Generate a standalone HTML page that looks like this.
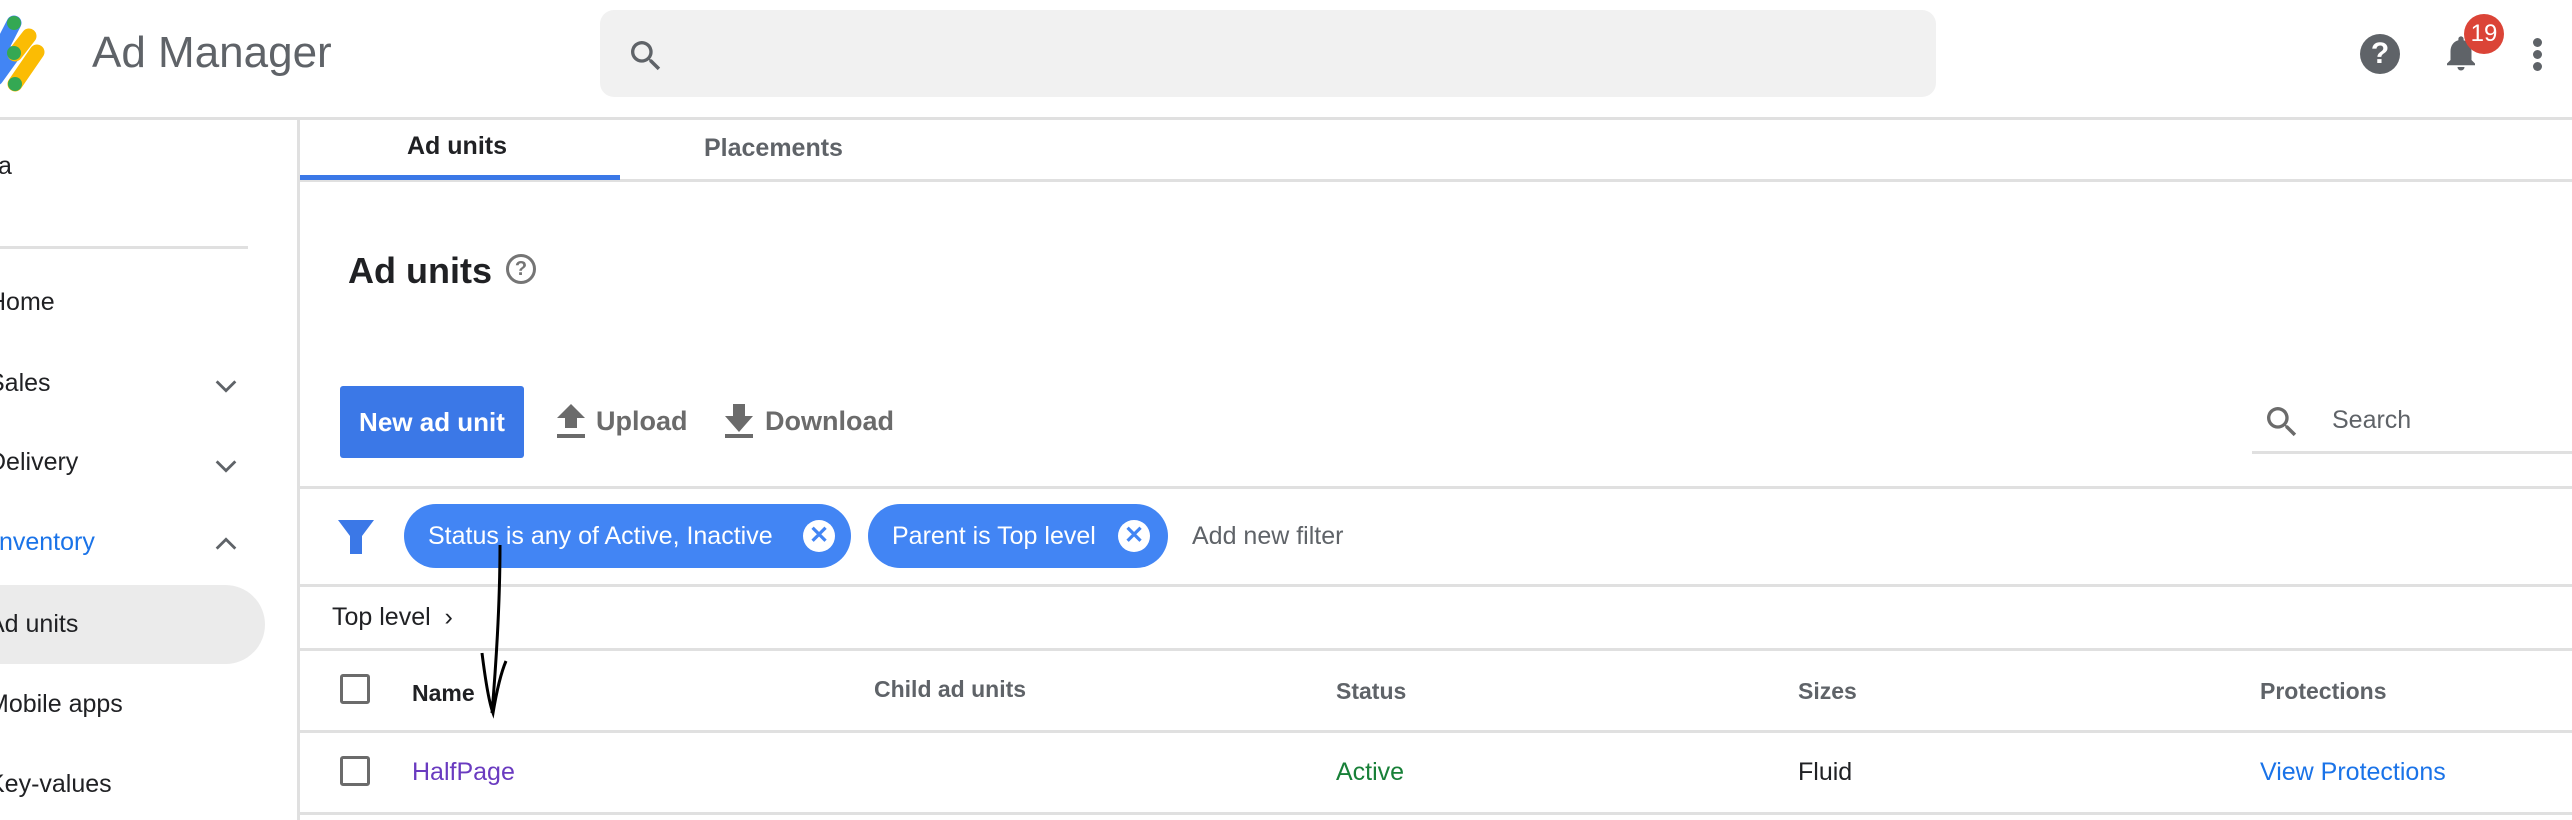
<!DOCTYPE html>
<html><head><meta charset="utf-8"><style>
*{margin:0;padding:0;box-sizing:border-box}
body{width:2572px;height:820px;overflow:hidden;background:#fff;font-family:"Liberation Sans",Arial,sans-serif;position:relative;color:#202124}
.a{position:absolute;white-space:nowrap}
.hl{position:absolute;height:3px;background:#e0e0e0}
.nav{font-size:25px;color:#202124}
.th{font-size:23px;color:#5f6368;font-weight:bold}
.cb{position:absolute;width:30px;height:30px;border:3px solid #6b6b6b;border-radius:3px}
.chip{position:absolute;height:64px;border-radius:32px;background:#4285f4;color:#fff;font-size:25px;line-height:64px;padding-left:24px}
.x{position:absolute;top:16px;width:32px;height:32px;border-radius:50%;background:#fff;color:#4285f4;font-size:24px;line-height:32px;text-align:center;font-weight:bold}
</style></head><body>
<svg class="a" style="left:0;top:0" width="60" height="100" viewBox="0 0 60 100">
<line x1="14" y1="23" x2="-6" y2="62" stroke="#4285f4" stroke-width="15" stroke-linecap="round"/>
<line x1="14" y1="53" x2="-4" y2="78" stroke="#4285f4" stroke-width="15" stroke-linecap="round"/>
<line x1="15" y1="54" x2="29" y2="36" stroke="#fbbc04" stroke-width="15" stroke-linecap="round"/>
<line x1="15" y1="84" x2="37" y2="52" stroke="#fbbc04" stroke-width="15" stroke-linecap="round"/>
<circle cx="14" cy="23" r="7" fill="#34a853"/><circle cx="14" cy="53" r="7" fill="#34a853"/><circle cx="15" cy="84" r="7" fill="#34a853"/>
</svg>
<div class="a" style="left:92px;top:28px;font-size:44px;color:#5f6368">Ad Manager</div>
<div class="a" style="left:600px;top:10px;width:1336px;height:87px;background:#f1f1f1;border-radius:14px"></div>
<svg class="a" style="left:626px;top:36px" width="40" height="40" viewBox="0 0 24 24"><path fill="#5f6368" d="M15.5 14h-.79l-.28-.27A6.470 6.470 0 0 0 16 9.5 6.5 6.5 0 1 0 9.5 16c1.61 0 3.090-.59 4.230-1.57l.27.28v.79l5 4.99L20.49 19l-4.99-5zm-6 0C7.01 14 5 11.99 5 9.5S7.01 5 9.5 5 14 7.01 14 9.5 11.99 14 9.5 14z"/></svg>
<div class="a" style="left:2360px;top:34px;width:40px;height:40px;border-radius:50%;background:#5f6368;color:#fff;font-size:30px;font-weight:bold;text-align:center;line-height:40px">?</div>
<svg class="a" style="left:2440px;top:30px" width="42" height="46" viewBox="0 0 24 24"><path fill="#5f6368" d="M12 22c1.1 0 2-.9 2-2h-4c0 1.1.9 2 2 2zm6-6v-5c0-3.07-1.63-5.64-4.5-6.32V4c0-.83-.67-1.5-1.5-1.5s-1.5.67-1.5 1.5v.68C7.64 5.36 6 7.92 6 11v5l-2 2v1h16v-1l-2-2z"/></svg>
<div class="a" style="left:2464px;top:14px;width:40px;height:40px;border-radius:50%;background:#db4437;color:#fff;font-size:24px;text-align:center;line-height:40px">19</div>
<div class="a" style="left:2533px;top:38px;width:9px;height:9px;border-radius:50%;background:#5f6368;box-shadow:0 12px 0 #5f6368,0 24px 0 #5f6368"></div>
<div class="hl" style="left:0;top:117px;width:2572px"></div>
<div class="a" style="left:297px;top:118px;width:3px;height:702px;background:#e0e0e0"></div>
<div class="a nav" style="left:-2px;top:152px">a</div>
<div class="hl" style="left:0;top:246px;width:248px"></div>
<div class="a nav" style="left:-12px;top:288px">Home</div>
<div class="a nav" style="left:-12px;top:369px">Sales</div>
<div class="a nav" style="left:-12px;top:448px">Delivery</div>
<div class="a nav" style="left:-8px;top:528px;color:#1a73e8">Inventory</div>
<div class="a" style="left:0;top:585px;width:265px;height:79px;background:#ebebeb;border-radius:0 40px 40px 0"></div>
<div class="a nav" style="left:-12px;top:610px">Ad units</div>
<div class="a nav" style="left:-12px;top:690px">Mobile apps</div>
<div class="a nav" style="left:-12px;top:770px">Key-values</div>
<svg class="a" style="left:212px;top:372px" width="28" height="28" viewBox="0 0 24 24"><path d="M4 8l8 8 8-8" fill="none" stroke="#5f6368" stroke-width="2.4"/></svg>
<svg class="a" style="left:212px;top:452px" width="28" height="28" viewBox="0 0 24 24"><path d="M4 8l8 8 8-8" fill="none" stroke="#5f6368" stroke-width="2.4"/></svg>
<svg class="a" style="left:212px;top:530px" width="28" height="28" viewBox="0 0 24 24"><path d="M4 16l8-8 8 8" fill="none" stroke="#5f6368" stroke-width="2.4"/></svg>
<div class="a" style="left:407px;top:132px;font-size:25px;font-weight:bold">Ad units</div>
<div class="a" style="left:704px;top:134px;font-size:25px;font-weight:bold;color:#5f6368">Placements</div>
<div class="hl" style="left:300px;top:179px;width:2272px"></div>
<div class="a" style="left:300px;top:175px;width:320px;height:5px;background:#3b78e7"></div>
<div class="a" style="left:348px;top:250px;font-size:36px;font-weight:bold">Ad units</div>
<div class="a" style="left:506px;top:254px;width:30px;height:30px;border:3px solid #757575;border-radius:50%;color:#757575;font-size:20px;text-align:center;line-height:24px;font-weight:bold">?</div>
<div class="a" style="left:340px;top:386px;width:184px;height:72px;background:#3b78e7;border-radius:3px;color:#fff;font-size:26px;font-weight:bold;text-align:center;line-height:72px">New ad unit</div>
<svg class="a" style="left:556px;top:404px" width="30" height="36" viewBox="0 0 14 18"><path fill="#6b6b6b" d="M4 12h6V7h4L7 0 0 7h4zM0 15h14v2H0z"/></svg>
<div class="a" style="left:596px;top:406px;font-size:27px;font-weight:bold;color:#6b6b6b">Upload</div>
<svg class="a" style="left:724px;top:404px" width="30" height="36" viewBox="0 0 14 18"><path fill="#6b6b6b" d="M4 0h6v6h4l-7 8-7-8h4zM0 15h14v2H0z"/></svg>
<div class="a" style="left:765px;top:406px;font-size:27px;font-weight:bold;color:#6b6b6b">Download</div>
<svg class="a" style="left:2262px;top:402px" width="40" height="40" viewBox="0 0 24 24"><path fill="#6b6b6b" d="M15.5 14h-.79l-.28-.27A6.47 6.47 0 0 0 16 9.5 6.5 6.5 0 1 0 9.5 16c1.61 0 3.09-.59 4.23-1.57l.27.28v.79l5 4.99L20.49 19l-4.99-5zm-6 0C7.01 14 5 11.99 5 9.5S7.01 5 9.5 5 14 7.01 14 9.5 11.99 14 9.5 14z"/></svg>
<div class="a" style="left:2332px;top:406px;font-size:25px;color:#5f6368">Search</div>
<div class="hl" style="left:2252px;top:451px;width:320px"></div>
<div class="hl" style="left:300px;top:486px;width:2272px"></div>
<svg class="a" style="left:338px;top:520px" width="36" height="34" viewBox="0 0 18 17"><path fill="#3b78e7" d="M0 0h18l-6 8v9H6V8z"/></svg>
<div class="chip" style="left:404px;top:504px;width:447px">Status is any of Active, Inactive<div class="x" style="left:399px">✕</div></div>
<div class="chip" style="left:868px;top:504px;width:300px">Parent is Top level<div class="x" style="left:250px">✕</div></div>
<div class="a" style="left:1192px;top:522px;font-size:25px;color:#5f6368">Add new filter</div>
<div class="hl" style="left:300px;top:584px;width:2272px"></div>
<div class="a" style="left:332px;top:603px;font-size:25px">Top level &nbsp;›</div>
<div class="hl" style="left:300px;top:648px;width:2272px"></div>
<div class="cb" style="left:340px;top:674px"></div>
<div class="a th" style="left:412px;top:680px;color:#202124">Name</div>
<div class="a th" style="left:874px;top:676px">Child ad units</div>
<div class="a th" style="left:1336px;top:678px">Status</div>
<div class="a th" style="left:1798px;top:678px">Sizes</div>
<div class="a th" style="left:2260px;top:678px">Protections</div>
<div class="hl" style="left:300px;top:730px;width:2272px"></div>
<div class="cb" style="left:340px;top:756px"></div>
<div class="a" style="left:412px;top:758px;font-size:25px;color:#6a3bc0">HalfPage</div>
<div class="a" style="left:1336px;top:758px;font-size:25px;color:#188038">Active</div>
<div class="a" style="left:1798px;top:758px;font-size:25px">Fluid</div>
<div class="a" style="left:2260px;top:758px;font-size:25px;color:#1a73e8">View Protections</div>
<div class="hl" style="left:300px;top:812px;width:2272px"></div>
<svg class="a" style="left:0;top:0" width="2572" height="820"><path d="M400 560 C 400 620 396 680 392 728 M382 668 C 386 700 390 720 393 728 C 396 710 400 690 406 676" fill="none" stroke="#000" stroke-width="3" transform="translate(100,-15)"/></svg>
</body></html>
